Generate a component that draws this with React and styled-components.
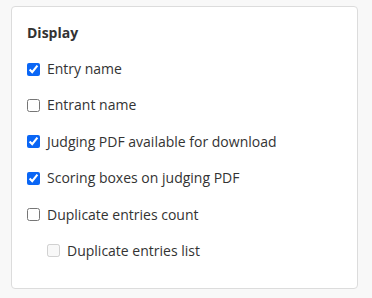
import styled, { createGlobalStyle } from "styled-components";

const GlobalStyle = createGlobalStyle`
  body {
    margin: 0;
    background: #f8f8f8;
    font-family: "Open Sans", "Liberation Sans", sans-serif;
  }
`;

// page wrapper
const Page = styled.div`
  padding: 6px 14px 8px 11px;
`;

// white card with the options
const Card = styled.section`
  background: #fff;
  border: 1px solid #dcdcdc;
  border-radius: 4px;
  height: 283px;
  box-sizing: border-box;
  padding: 16px 15px;
`;

const Title = styled.h3`
  margin: 0 0 16px;
  font-size: 14px;
  line-height: 20px;
  font-weight: 700;
  color: #333;
`;

const List = styled.div`
  display: flex;
  flex-direction: column;
  gap: 16.4px;
`;

const Row = styled.label`
  display: flex;
  align-items: center;
  gap: 7px;
  padding-left: ${(p) => (p.$nested ? "20px" : "0")};
  font-size: 14px;
  line-height: 20px;
  color: #333;
`;

const Box = styled.input.attrs({ type: "checkbox" })`
  margin: 0;
  width: 13px;
  height: 13px;
  accent-color: #0a66f5;
`;

const options = [
  { label: "Entry name", checked: true },
  { label: "Entrant name", checked: false },
  { label: "Judging PDF available for download", checked: true },
  { label: "Scoring boxes on judging PDF", checked: true },
  { label: "Duplicate entries count", checked: false },
  { label: "Duplicate entries list", checked: false, nested: true, disabled: true },
];

const App = () => {
  return (
    <>
      <GlobalStyle />
      <Page>
        <Card>
          <Title>Display</Title>
          <List>
            {options.map((o) => (
              <Row key={o.label} $nested={o.nested}>
                <Box defaultChecked={o.checked} disabled={o.disabled} />
                {o.label}
              </Row>
            ))}
          </List>
        </Card>
      </Page>
    </>
  );
};

export default App;
